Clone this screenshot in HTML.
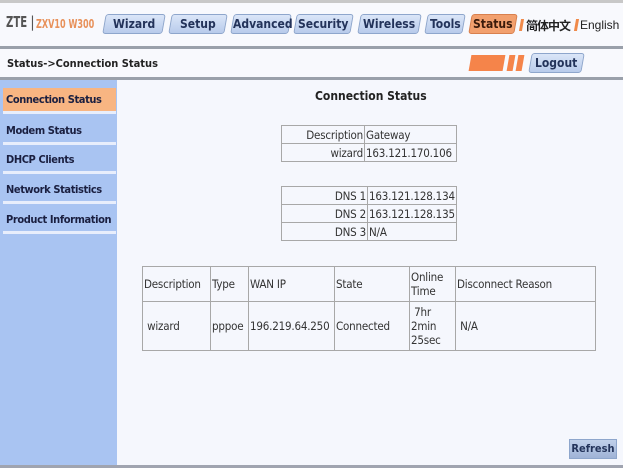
<!DOCTYPE html>
<html><head><meta charset="utf-8"><style>
*{margin:0;padding:0;box-sizing:border-box}
body{width:623px;height:468px;overflow:hidden;background:#f5f7fd;font-family:"Liberation Sans","DejaVu Sans",sans-serif;position:relative}
.a{position:absolute}
.tab{position:absolute;top:14px;height:20px;background:linear-gradient(#dbe6f8,#b8cbeb);border:1px solid #8ea6cc;border-radius:3px;transform:skewX(-10deg);font:bold 12px "DejaVu Sans Condensed","DejaVu Sans",sans-serif;color:#23335a;text-align:center;line-height:18px;white-space:nowrap}
.tab span{display:inline-block;transform:skewX(10deg)}
.side{position:absolute;left:3px;width:113px;height:26px;font:bold 11px "DejaVu Sans Condensed","DejaVu Sans",sans-serif;letter-spacing:-.4px;white-space:nowrap;color:#1a1f40;padding-left:3px;line-height:24px;border-bottom:3px solid #e8eefc}
table{position:absolute;border-collapse:collapse;font:11.5px "DejaVu Sans Condensed","DejaVu Sans",sans-serif;letter-spacing:-.2px;color:#333}
td{border:1px solid #a8a8a8;padding:0 1px;height:18px;white-space:nowrap}
.r{text-align:right}
</style></head><body>
<div class="a" style="left:0;top:0;width:623px;height:3px;background:#c8c8c8"></div>
<div class="a" style="left:0;top:3px;width:623px;height:43px;background:#f8f9fd"></div>
<div class="a" style="left:6px;top:13px;font:bold 15px 'DejaVu Sans Condensed',sans-serif;color:#555;transform:scaleX(.75);transform-origin:left;white-space:nowrap">ZTE |</div>
<div class="a" style="left:36px;top:17px;font:bold 12px 'DejaVu Sans Condensed',sans-serif;color:#e8915a;transform:scaleX(.75);transform-origin:left;white-space:nowrap">ZXV10 W300</div>
<div class="tab" style="left:104px;width:60px"><span>Wizard</span></div>
<div class="tab" style="left:170px;width:56px"><span>Setup</span></div>
<div class="tab" style="left:232px;width:58px"><span>Advanced</span></div>
<div class="tab" style="left:295px;width:57px"><span>Security</span></div>
<div class="tab" style="left:359px;width:61px"><span>Wireless</span></div>
<div class="tab" style="left:426px;width:38px"><span>Tools</span></div>
<div class="tab" style="left:470px;width:46px;background:#f2a06e;border-color:#d8804e;color:#3a1a0a"><span>Status</span></div>
<div class="a" style="left:520px;top:19px;width:3px;height:12px;background:#f08a4a;transform:skewX(-10deg)"></div>
<div class="a" style="left:526px;top:17px;font:12px 'Noto Sans CJK SC',sans-serif;color:#222;font-weight:bold;letter-spacing:-1px">简体中文</div>
<div class="a" style="left:575px;top:19px;width:3px;height:12px;background:#f08a4a;transform:skewX(-10deg)"></div>
<div class="a" style="left:580px;top:18px;font:12px 'Liberation Sans',sans-serif;color:#222">English</div>
<div class="a" style="left:0;top:46px;width:623px;height:3px;background:#9aa0aa"></div>
<div class="a" style="left:0;top:49px;width:623px;height:28px;background:#f8f9fd"></div>
<div class="a" style="left:7px;top:57px;font:bold 11px 'DejaVu Sans Condensed',sans-serif;color:#222">Status-&gt;Connection Status</div>
<div class="a" style="left:470px;top:55px;width:34px;height:16px;background:#f5844a;transform:skewX(-10deg)"></div>
<div class="a" style="left:508px;top:55px;width:6px;height:16px;background:#f5844a;transform:skewX(-10deg)"></div>
<div class="a" style="left:517px;top:55px;width:6px;height:16px;background:#f5844a;transform:skewX(-10deg)"></div>
<div class="tab" style="left:530px;top:53px;width:53px"><span>Logout</span></div>
<div class="a" style="left:0;top:77px;width:623px;height:3px;background:#9aa0aa"></div>
<div class="a" style="left:0;top:80px;width:117px;height:385px;background:#a9c4f2"></div>
<div class="side" style="top:88px;background:#f8b582">Connection Status</div>
<div class="side" style="top:119px">Modem Status</div>
<div class="side" style="top:148px">DHCP Clients</div>
<div class="side" style="top:178px">Network Statistics</div>
<div class="side" style="top:208px">Product Information</div>
<div class="a" style="left:0;top:465px;width:623px;height:3px;background:#a0a4b0"></div>
<div class="a" style="left:315px;top:89px;font:bold 12px 'DejaVu Sans Condensed',sans-serif;color:#222">Connection Status</div>
<table style="left:281px;top:125px;width:176px">
<tr><td class="r" style="width:83px">Description</td><td>Gateway</td></tr>
<tr><td class="r">wizard</td><td>163.121.170.106</td></tr></table>
<table style="left:281px;top:186px;width:176px">
<tr><td class="r" style="width:86px">DNS 1</td><td>163.121.128.134</td></tr>
<tr><td class="r">DNS 2</td><td>163.121.128.135</td></tr>
<tr><td class="r">DNS 3</td><td>N/A</td></tr></table>
<table style="left:142px;top:266px;width:454px">
<tr style="height:35px"><td style="width:68px">Description</td><td style="width:38px">Type</td><td style="width:86px">WAN IP</td><td style="width:75px">State</td><td style="width:46px;white-space:normal;line-height:14px">Online Time</td><td>Disconnect Reason</td></tr>
<tr style="height:49px"><td>&nbsp;wizard</td><td>pppoe</td><td>196.219.64.250</td><td>Connected</td><td style="white-space:normal;line-height:14px">&nbsp;7hr 2min 25sec</td><td>&nbsp;N/A</td></tr></table>
<div class="a" style="left:569px;top:439px;width:48px;height:20px;background:linear-gradient(#c0d0ea,#9fb3d6);border:1px solid #8ea6cc;font:bold 11px 'DejaVu Sans Condensed',sans-serif;color:#23335a;text-align:center;line-height:18px">Refresh</div>
</body></html>
